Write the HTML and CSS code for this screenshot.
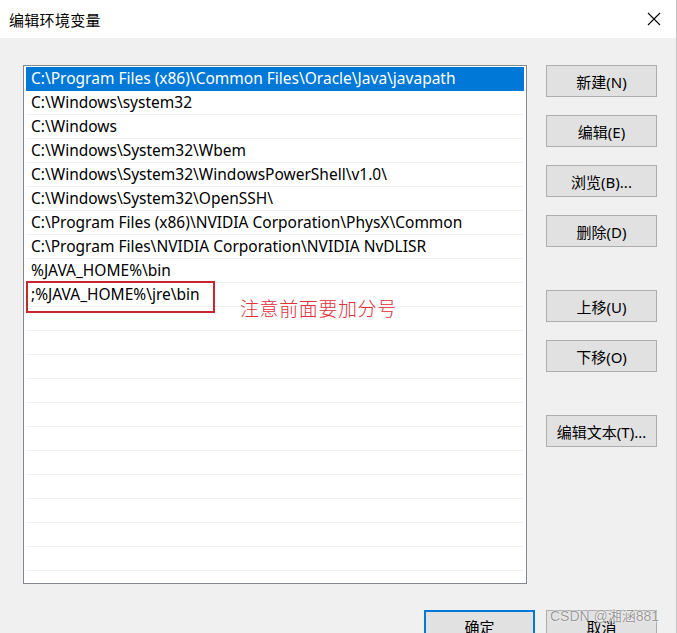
FILE: index.html
```html
<!DOCTYPE html>
<html lang="zh-CN">
<head>
<meta charset="UTF-8">
<title>编辑环境变量</title>
<link rel="stylesheet" href="styles.css">
</head>
<body>
<div class="dialog">
  <div class="titlebar">
    <span class="title">编辑环境变量</span>
    <svg class="close" width="14" height="14" viewBox="0 0 14 14">
      <path d="M1 1 L13 13 M13 1 L1 13" stroke="#000" stroke-width="1.1" fill="none"/>
    </svg>
  </div>
  <div class="content">
    <div class="main">
      <div class="list">
        <div class="row selected">C:\Program Files (x86)\Common Files\Oracle\Java\javapath</div>
        <div class="row">C:\Windows\system32</div>
        <div class="row">C:\Windows</div>
        <div class="row">C:\Windows\System32\Wbem</div>
        <div class="row">C:\Windows\System32\WindowsPowerShell\v1.0\</div>
        <div class="row">C:\Windows\System32\OpenSSH\</div>
        <div class="row">C:\Program Files (x86)\NVIDIA Corporation\PhysX\Common</div>
        <div class="row">C:\Program Files\NVIDIA Corporation\NVIDIA NvDLISR</div>
        <div class="row">%JAVA_HOME%\bin</div>
        <div class="row">;%JAVA_HOME%\jre\bin</div>
        <div class="row"></div>
        <div class="row"></div>
        <div class="row"></div>
        <div class="row"></div>
        <div class="row"></div>
        <div class="row"></div>
        <div class="row"></div>
        <div class="row"></div>
        <div class="row"></div>
        <div class="row"></div>
        <div class="row"></div>
        <div class="row"></div>
        <!-- annotation drawn over the screenshot -->
        <div class="mark-box"></div>
        <div class="mark-note">注意前面要加分号</div>
      </div>
      <div class="buttons">
        <button class="btn">新建(N)</button>
        <button class="btn">编辑(E)</button>
        <button class="btn">浏览(B)...</button>
        <button class="btn">删除(D)</button>
        <button class="btn group">上移(U)</button>
        <button class="btn">下移(O)</button>
        <button class="btn group">编辑文本(T)...</button>
      </div>
    </div>
    <div class="footer">
      <button class="btn default">确定</button>
      <button class="btn">取消</button>
    </div>
  </div>
  <div class="watermark">CSDN @湘涵881</div>
</div>
</body>
</html>
```

FILE: styles.css
```css
html, body {
    margin: 0;
    height: 100%;
    overflow: hidden;
}
body {
    background: #f0f0f0;
    font-family: "Noto Sans", "Noto Sans CJK SC", sans-serif;
    font-size: 15px;
    color: #000;
}
.dialog {
    position: relative;
    height: 633px;
    border-right: 1px solid #c4c4c4;
    box-sizing: border-box;
}
.titlebar {
    height: 38px;
    background: #fff;
    display: flex;
    align-items: center;
    justify-content: space-between;
    padding: 0 15px 0 9px;
}
.title {
    font-family: "Noto Sans CJK SC", sans-serif;
    font-size: 15px;
    letter-spacing: 0.3px;
}
.close {
    display: block;
}
.content {
    padding: 27px 19px 0 23px;
}
.main {
    display: flex;
    align-items: flex-start;
}
.list {
    position: relative;
    width: 504px;
    height: 519px;
    box-sizing: border-box;
    border: 1px solid #828790;
    background: #fff;
    padding: 1px 2px;
    overflow: hidden;
}
.row {
    height: 23px;
    line-height: 23px;
    border-bottom: 1px solid #f0f0f0;
    padding-left: 5px;
    white-space: nowrap;
    font-size: 15.5px;
}
.row.selected {
    background: #0078d7;
    color: #fff;
    border-bottom-color: #0078d7;
}
.mark-box {
    position: absolute;
    left: 2px;
    top: 215px;
    width: 185px;
    height: 28px;
    border: 2px solid #c8282d;
}
.mark-note {
    position: absolute;
    left: 216px;
    top: 228px;
    font-family: "Noto Sans CJK SC", serif;
    font-size: 19px;
    font-weight: 300;
    color: #e0303a;
    letter-spacing: 0.6px;
}
.buttons {
    display: flex;
    flex-direction: column;
    gap: 18px;
    margin-left: 19px;
}
.btn {
    width: 111px;
    height: 32px;
    box-sizing: border-box;
    background: #e1e1e1;
    border: 1px solid #adadad;
    font-family: "Noto Sans", "Noto Sans CJK SC", sans-serif;
    font-size: 15px;
    color: #000;
    padding: 0;
}
.btn.group {
    margin-top: 25px;
}
.footer {
    display: flex;
    justify-content: flex-end;
    gap: 11px;
    margin-top: 26px;
}
.btn.default {
    border: 2px solid #0078d7;
}
.watermark {
    position: absolute;
    left: 550px;
    top: 605px;
    font-family: "Liberation Sans", "Noto Sans CJK SC", sans-serif;
    font-size: 14px;
    color: #9a9a9a;
    text-shadow: 0 0 2px #fff, 0 0 1px #fff;
}
```
